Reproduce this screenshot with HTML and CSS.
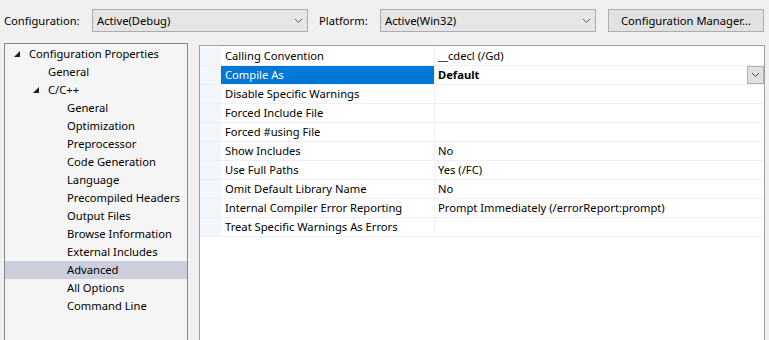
FILE: index.html
```html
<!DOCTYPE html>
<html>
<head>
<meta charset="utf-8">
<link rel="stylesheet" href="styles.css">
</head>
<body>
<div class="toolbar">
  <span class="lbl lbl-config">Configuration:</span>
  <div class="combo combo-config"><span>Active(Debug)</span><svg class="chev" width="9" height="6" viewBox="0 0 9 6"><path d="M1 1 L4.5 4.5 L8 1" fill="none" stroke="#606060" stroke-width="1"/></svg></div>
  <span class="lbl lbl-plat">Platform:</span>
  <div class="combo combo-plat"><span>Active(Win32)</span><svg class="chev" width="9" height="6" viewBox="0 0 9 6"><path d="M1 1 L4.5 4.5 L8 1" fill="none" stroke="#606060" stroke-width="1"/></svg></div>
  <div class="btn">Configuration Manager...</div>
</div>
<div class="main">
  <div class="tree">
    <div class="node l0"><span class="tri"></span>Configuration Properties</div>
    <div class="node l1">General</div>
    <div class="node l1"><span class="tri"></span>C/C++</div>
    <div class="node l2">General</div>
    <div class="node l2">Optimization</div>
    <div class="node l2">Preprocessor</div>
    <div class="node l2">Code Generation</div>
    <div class="node l2">Language</div>
    <div class="node l2">Precompiled Headers</div>
    <div class="node l2">Output Files</div>
    <div class="node l2">Browse Information</div>
    <div class="node l2">External Includes</div>
    <div class="node l2 sel">Advanced</div>
    <div class="node l2">All Options</div>
    <div class="node l2">Command Line</div>
  </div>
  <div class="grid">
    <div class="row"><div class="gut"></div><div class="name">Calling Convention</div><div class="val">__cdecl (/Gd)</div></div>
    <div class="row active"><div class="gut"></div><div class="name">Compile As</div><div class="val"><b>Default</b><span class="dd"><svg width="9" height="6" viewBox="0 0 9 6"><path d="M1 1 L4.5 4.5 L8 1" fill="none" stroke="#404040" stroke-width="1"/></svg></span></div></div>
    <div class="row"><div class="gut"></div><div class="name">Disable Specific Warnings</div><div class="val"></div></div>
    <div class="row"><div class="gut"></div><div class="name">Forced Include File</div><div class="val"></div></div>
    <div class="row"><div class="gut"></div><div class="name">Forced #using File</div><div class="val"></div></div>
    <div class="row"><div class="gut"></div><div class="name">Show Includes</div><div class="val">No</div></div>
    <div class="row"><div class="gut"></div><div class="name">Use Full Paths</div><div class="val">Yes (/FC)</div></div>
    <div class="row"><div class="gut"></div><div class="name">Omit Default Library Name</div><div class="val">No</div></div>
    <div class="row"><div class="gut"></div><div class="name">Internal Compiler Error Reporting</div><div class="val">Prompt Immediately (/errorReport:prompt)</div></div>
    <div class="row"><div class="gut"></div><div class="name">Treat Specific Warnings As Errors</div><div class="val"></div></div>
  </div>
</div>
</body>
</html>
```

FILE: styles.css
```css
html, body {
  margin: 0;
  padding: 0;
  background: #f0f0f0;
  overflow: hidden;
  width: 769px;
  height: 340px;
  font-family: "Noto Sans", "Open Sans", sans-serif;
  font-size: 11.2px;
  color: #000;
}

.toolbar {
  display: flex;
  align-items: center;
  height: 23px;
  padding-top: 9px;
}

.lbl {
  white-space: nowrap;
}
.lbl-config { margin-left: 4px; width: 88px; }
.lbl-plat { margin-left: 11px; width: 61px; }

.combo {
  box-sizing: border-box;
  height: 23px;
  width: 216px;
  background: #e5e5e5;
  border: 1px solid #acacac;
  display: flex;
  align-items: center;
  justify-content: space-between;
  padding: 0 4px 0 4px;
}

.btn {
  box-sizing: border-box;
  margin-left: 12px;
  height: 23px;
  width: 156px;
  background: #e1e1e1;
  border: 1px solid #adadad;
  display: flex;
  align-items: center;
  justify-content: center;
}

.main {
  display: flex;
  align-items: flex-start;
  margin-top: 11px;
}

.tree {
  box-sizing: border-box;
  margin-left: 4px;
  width: 184px;
  height: 320px;
  background: #f5f5f5;
  border: 1px solid #828790;
  padding-top: 1px;
}

.node {
  height: 18px;
  line-height: 18px;
  white-space: nowrap;
  position: relative;
}
.node.l0 { padding-left: 24px; }
.node.l1 { padding-left: 43px; }
.node.l2 { padding-left: 62px; }
.node.sel { background: #cccedb; }

.tri {
  position: absolute;
  top: 6px;
  width: 0;
  height: 0;
  border-left: 6px solid transparent;
  border-bottom: 6px solid #1e1e1e;
}
.l0 .tri { left: 9px; }
.l1 .tri { left: 28px; }

.grid {
  box-sizing: border-box;
  margin-left: 11px;
  margin-top: 2px;
  width: 566px;
  height: 320px;
  background: #fff;
  border: 1px solid #a0a0a0;
  padding-top: 1px;
}

.row {
  display: flex;
  height: 19px;
  box-sizing: border-box;
  border-bottom: 1px solid #f0f0f4;
}
.gut {
  width: 21px;
  background: #f3f6fb;
  flex: none;
}
.name {
  width: 214px;
  flex: none;
  padding-left: 4px;
  box-sizing: border-box;
  line-height: 18px;
  border-right: 1px solid #f0f0f4;
  white-space: nowrap;
}
.val {
  flex: 1;
  padding-left: 3px;
  line-height: 18px;
  white-space: nowrap;
  display: flex;
  align-items: center;
  justify-content: space-between;
}
.active .name {
  background: #0078d7;
  color: #fff;
}
.dd {
  box-sizing: border-box;
  width: 17px;
  height: 18px;
  background: #e0e0e0;
  border: 1px solid #b0b0b0;
  display: flex;
  align-items: center;
  justify-content: center;
}
```
